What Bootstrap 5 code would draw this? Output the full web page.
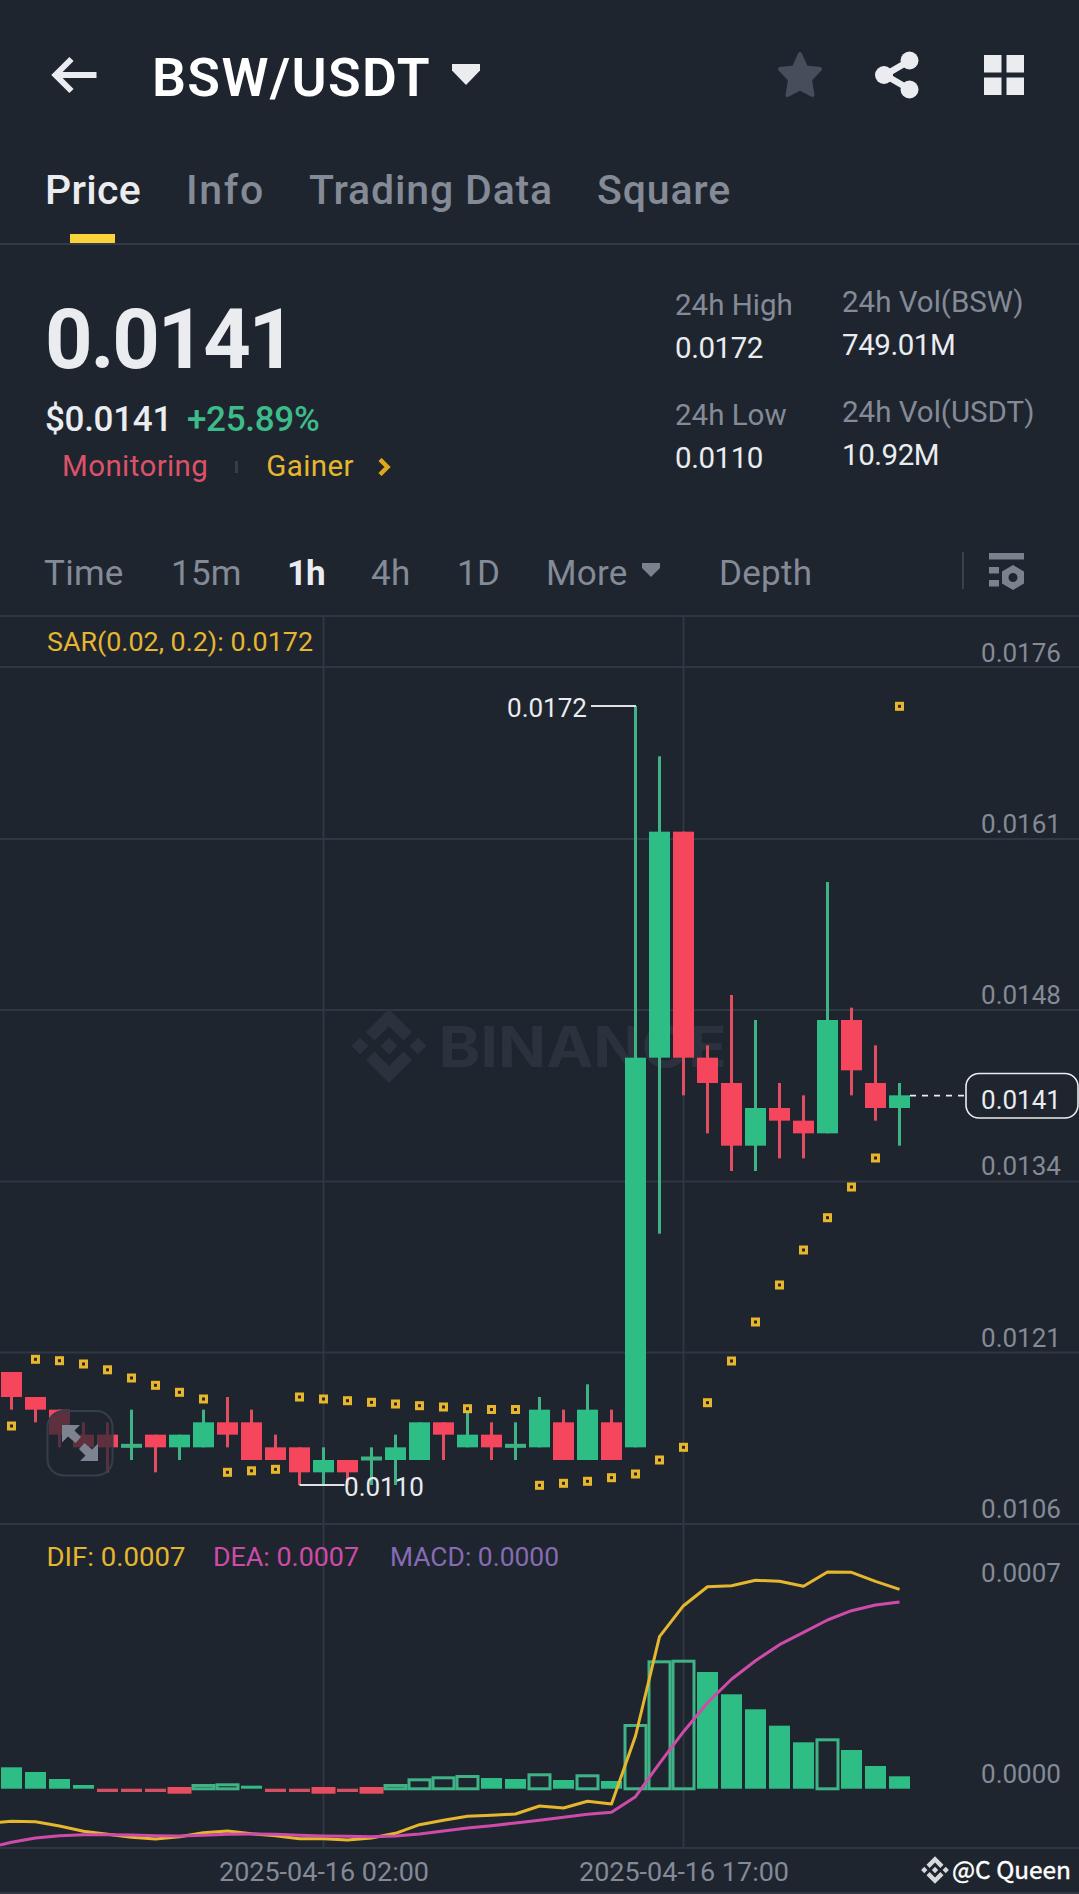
<!DOCTYPE html>
<html lang="en">
<head>
<meta charset="utf-8">
<meta name="viewport" content="width=device-width, initial-scale=1">
<title>BSW/USDT</title>
<link href="https://cdn.jsdelivr.net/npm/bootstrap@5.3.0/dist/css/bootstrap.min.css" rel="stylesheet">
<style>
  :root { --bg:#1e252f; --line:#2f3742; --txt:#eaecef; --dim:#848a96; --up:#2ebd85; --down:#f6465d; --gold:#e6b72e; }
  body { background:var(--bg); color:var(--txt); font-family:Roboto,"Liberation Sans",sans-serif; line-height:1; overflow-x:hidden; }
  svg { display:block; }
  .app { width:1079px; height:1894px; overflow:hidden; }
  .topbar { height:170px; padding:50px 55px 0 51px; }
  .topbar > div { height:54px; }
  .pair { font-size:53.5px; font-weight:600; color:#fff; margin-left:55px; letter-spacing:1.4px; padding-top:2px; }
  .pair-caret { margin:0 0 5px 21px; }
  .tools { gap:57px; padding-bottom:5px; }
  .tabs { height:75px; border-bottom:2px solid #343b47; display:grid; grid-template-columns:141px 123px 288px auto; padding-left:45px; font-size:41px; font-weight:500; color:var(--dim); letter-spacing:.85px; }
  .tabs a { color:inherit; text-decoration:none; }
  .tabs a.on { color:var(--txt); width:94px; letter-spacing:.3px; }
  .tabs a.on::after { content:""; display:block; width:45px; height:9px; margin:23px auto 0; background:#f8d33a; }
  .tabs .info { letter-spacing:1.7px; }
  .ticker { height:300px; padding:53px 0 0 45px; }
  .last { font-size:83px; font-weight:700; letter-spacing:-2.2px; }
  .sub-row { font-size:35px; font-weight:500; margin-top:21px; gap:15px; letter-spacing:-.3px; }
  .tag-row { font-size:29.5px; margin:15px 0 0 17px; letter-spacing:.4px; }
  .tag-sep { width:3px; height:12px; background:#363d49; margin:0 28px 0 27px; }
  .gold { color:var(--gold); } .up { color:#3dbb88; } .down { color:#dc5268; }
  .stats { font-size:29.5px; width:404px; display:grid; grid-template-columns:167px auto; }
  .stats dl { margin:0; } .stats dt { font-weight:400; color:var(--dim); margin-bottom:13px; } .stats dd { margin-bottom:38px; letter-spacing:-.45px; }
  .col-a { margin-top:-7px; } .col-b { margin-top:-10px; }
  .frames { height:70px; padding:11px 0 0 44px; display:grid; grid-template-columns:127px 116px 84px 86px 89px 173px 243px 27px auto; font-size:35px; color:var(--dim); align-items:start; letter-spacing:.25px; }
  .frames .on { color:var(--txt); font-weight:700; letter-spacing:-1px; }
  .frame-sep { width:2px; height:37px; background:#3a414d; margin-top:-4px; }
</style>
</head>
<body>
<main class="app">
  <header class="topbar">
    <div class="d-flex align-items-center">
      <svg width="46" height="38" viewBox="0 0 46 38" class="mb-1" fill="none" stroke="#eaecef" stroke-width="6"><path d="M45.5 19H5M20.5 3L4.500 19L20.500 35"/></svg>
      <span class="pair">BSW/USDT</span>
      <svg class="pair-caret" width="28" height="21" viewBox="0 0 28 21" fill="#eaecef"><path d="M0 0H28V6.500L14 21L0 6.500Z"/></svg>
      <div class="tools d-flex align-items-center ms-auto">
        <svg width="46" height="47" viewBox="0 0 46 47" style="margin-right:-5px" fill="#474d5a" stroke="#474d5a" stroke-width="4" stroke-linejoin="round"><path d="M23 3L29 16.500L43 18L33 28.500L35.500 44L23 37.500L10.500 44L13 28.500L3 18L17 16.500Z"/></svg>
        <svg width="44" height="48" viewBox="0 0 44 48" style="margin-right:8px" fill="#eaecef"><path d="M34 10L10 24L34 38" fill="none" stroke="#eaecef" stroke-width="6.500"/><circle cx="34.500" cy="9.500" r="9"/><circle cx="9" cy="24" r="9"/><circle cx="34.500" cy="38.500" r="9"/></svg>
        <svg width="40" height="40" viewBox="0 0 40 40" fill="#eaecef"><path d="M0 0H17.500V17.500H0ZM22.500 0H40V17.500H22.500ZM0 22.500H17.500V40H0ZM22.500 22.500H40V40H22.500Z"/></svg>
      </div>
    </div>
  </header>

  <nav class="tabs">
    <a class="on" href="#">Price</a><a class="info" href="#">Info</a><a href="#">Trading Data</a><a href="#">Square</a>
  </nav>

  <section class="ticker d-flex justify-content-between">
    <div>
      <div class="last">0.0141</div>
      <div class="sub-row d-flex"><span>$0.0141</span><span class="up">+25.89%</span></div>
      <div class="tag-row d-flex align-items-center">
        <span class="down">Monitoring</span><span class="tag-sep"></span><span class="gold">Gainer</span>
        <svg width="13" height="18" viewBox="0 0 13 18" style="margin-left:24px" fill="none" stroke="#dfa81c" stroke-width="4.500"><path d="M2 1.500L9.500 9L2 16.500"/></svg>
      </div>
    </div>
    <div class="stats">
      <div class="col-a"><dl><dt>24h High</dt><dd>0.0172</dd><dt>24h Low</dt><dd>0.0110</dd></dl></div>
      <div class="col-b"><dl><dt>24h Vol(BSW)</dt><dd>749.01M</dd><dt>24h Vol(USDT)</dt><dd>10.92M</dd></dl></div>
    </div>
  </section>

  <nav class="frames">
    <span>Time</span><span>15m</span><span class="on">1h</span><span>4h</span><span>1D</span>
    <span class="d-flex">More<svg width="18" height="14" viewBox="0 0 18 14" style="margin:7px 0 0 14px" fill="#7b818d"><path d="M0 0H18V5L9 14L0 5Z"/></svg></span>
    <span>Depth</span><span class="frame-sep"></span>
    <svg width="36" height="37" viewBox="0 0 36 37" style="margin-top:-3px" fill="#7b818d"><path d="M0 0H35V6.500H0ZM0 14H10V20.500H0ZM0 27H10V33.500H0Z"/><path fill-rule="evenodd" d="M24 12L35 18.500V30.500L24 37L13 30.500V18.500ZM24 20A4.500 4.500 0 1 0 24 29A4.500 4.500 0 1 0 24 20Z"/></svg>
  </nav>

  <svg id="chart" width="1079" height="1279" viewBox="0 615 1079 1279" font-family="Roboto, 'Liberation Sans', sans-serif" font-size="26"></svg>
</main>

<script src="https://cdn.jsdelivr.net/npm/bootstrap@5.3.0/dist/js/bootstrap.bundle.min.js"></script>
<script>
const BG='#1e252f', UP='#2ebd85', DOWN='#f6465d', UPW='#3fb386', DOWNW='#e34d62', GOLD='#e6b72e', PINK='#cf4ba9', DIM='#848a96', LINE='#2f3742';
let s='';
const cx=i=>11.5+24*i, py=p=>Math.round((1485-(p-110)*12.565)*3)/3;
const rect=(x,y,w,h,f,o='')=>s+=`<rect x="${x}" y="${y}" width="${w}" height="${h}" fill="${f}" ${o}/>`;
const text=(x,y,t,f,len,o='')=>s+=`<text x="${x}" y="${y}" fill="${f}" ${len?`textLength="${len}" lengthAdjust="spacingAndGlyphs"`:''} ${o}>${t}</text>`;
const logo=(x,y,k,f)=>s+=`<g transform="translate(${x} ${y}) scale(${k})" fill="${f}"><path d="M0 -37L23 -14L14.500 -5.500L0 -20L-14.500 -5.500L-23 -14ZM0 37L23 14L14.500 5.500L0 20L-14.500 5.500L-23 14ZM0 -8.500L8.500 0L0 8.500L-8.500 0ZM-29 -8.500L-20.500 0L-29 8.500L-37.500 0ZM29 -8.500L37.500 0L29 8.500L20.500 0Z"/></g>`;

// grid
[616,667,839,1010,1181.5,1352.5,1524,1848,1893].forEach(y=>rect(0,y-1,1079,2,LINE));
[323.5,683.5].forEach(x=>rect(x-1,616,2,1232,LINE));
// watermark
logo(389,1046,1,'#2b323d');
text(438.5,1067,'BINANCE','#2b323d',288,'font-family="Inter, sans-serif" font-weight="700" font-size="56.5"');

// candles: [up, top, bottom, high, low]
const C=[[0,119,117,119,116],[0,117,116,117,115],[0,116,114,116,113],[0,114,113,115,113],[0,114,113,115,111],[1,113,113,116,112],[0,114,113,114,111],[1,114,113,114,112],[1,115,113,116,113],[0,115,114,117,113],[0,115,112,116,112],[0,113,112,114,112],[0,113,111,113,110],[1,112,111,113,110],[0,112,111,112,110],[1,112,112,113,110],[1,113,112,114,110],[1,115,112,115,112],[0,115,114,115,112],[1,114,113,116,113],[0,114,113,115,112],[1,113,113,115,112],[1,116,113,117,113],[0,115,112,116,112],[1,116,112,118,112],[0,115,112,116,112],[1,144,113,172,113],[1,162,144,168,130],[0,162,144,162,141],[0,144,142,145,138],[0,142,137,149,135],[1,140,137,147,135],[0,140,139,142,136],[0,139,138,141,136],[1,147,138,158,138],[0,147,143,148,141],[0,142,140,145,139],[1,141,140,142,137]];
C.forEach(([u,t,b,h,l],i)=>{
  rect(cx(i)-1.5,py(h),3,py(l)-py(h),u?UPW:DOWNW);
  const d=t===b; rect(cx(i)-10.5,d?py(t)-3.5:py(t),21,d?4:py(b)-py(t),d?UPW:(u?UP:DOWN));
});

// parabolic SAR markers
const S=[1426,1359.3,1360.7,1364,1369.8,1378,1385.3,1392.3,1399,1472.3,1470.8,1469.3,1397,1399,1400.7,1402.3,1404,1405.7,1407,1408.7,1409.5,1409.5,1485.3,1483.3,1481.3,1477.7,1474,1460,1447.3,1402.7,1361,1322,1285,1250,1217.7,1187,1158,706.3];
S.forEach((y,i)=>{ rect(cx(i)-4.5,y-4.5,9,9,GOLD); rect(cx(i)-1.5,y-1.5,3,3,'#2b2414'); });

// price extremes, last price
rect(591,705,45,2,'#dfe1e5'); text(507,716.7,'0.0172','#eaecef',80);
rect(299.5,1484,45,2,'#dfe1e5'); text(344,1495.7,'0.0110','#eaecef',80);
s+=`<path d="M910 1095.700H966" stroke="#eaecef" stroke-width="1.700" stroke-dasharray="6 6"/>`;
rect(966,1073.5,112,44.5,BG,'rx="13" stroke="#eaecef" stroke-width="1.6"');
text(981,1108.7,'0.0141','#eaecef',80);

// axis
[['0.0176',662],['0.0161',833],['0.0148',1004],['0.0134',1174.7],['0.0121',1346.7],['0.0106',1517.7],['0.0007',1581.7],['0.0000',1783]].forEach(a=>text(981,a[1],a[0],DIM,80));
text(219,1881,'2025-04-16 02:00',DIM,210); text(579,1881,'2025-04-16 17:00',DIM,210);
text(47,650.7,'SAR(0.02, 0.2): 0.0172',GOLD,266);
text(46.5,1566,'DIF: 0.0007',GOLD,139); text(213,1566,'DEA: 0.0007',PINK,146); text(390,1566,'MACD: 0.0000','#866bb5',169);

// MACD histogram: 1st = style (f filled up, h hollow up, r filled down, q outlined down), 2nd = top
const M=[['f',1767.3],['f',1772],['f',1779],['f',1785],['r'],['r'],['r'],['q'],['h',1784],['h',1783.3],['f',1785.7],['r'],['r'],['q'],['r'],['q'],['h',1784],['h',1778.3],['h',1776.3],['h',1775],['f',1778],['f',1779],['h',1773.3],['f',1780],['h',1774.3],['f',1781],['h',1724],['h',1660.3],['h',1659.7],['f',1672],['f',1694.3],['f',1709.3],['f',1725.7],['f',1742.3],['h',1738.3],['f',1750],['f',1766],['f',1776.3]];
M.forEach(([k,y],i)=>{ const x=cx(i);
  if(k==='f') rect(x-10.5,y,21,1788.7-y,UP);
  if(k==='r') rect(x-10.5,1788.7,21,3.3,'#d64e62');
  if(k==='q') rect(x-12,1787,24,6.7,'#e84c61');
  if(k==='h') rect(x-10.5,y+1.5,21,1790.3-y-3,'none',`stroke="${UPW}" stroke-width="3"`);
});
const line=(a,c,x0)=>s+=`<polyline fill="none" stroke="${c}" stroke-width="3" stroke-linejoin="round" points="${[[0,x0],...a.map((v,i)=>[cx(i),v])].map(p=>p[0]+','+(1520+p[1]/3).toFixed(1)).join(' ')}"/>`;
line([904,905,918,934,943,952,957,950,938,933,941,947,956,956,960,954,940,914,901,889,886,882,858,864,844,852,648,350,257,200,197,181,184,199,156,157,184,208],GOLD,907);
line([967,954,947,944,944,945,947,948,946,943,942,943,946,948,949,950,948,942,933,924,917,909,901,892,883,877,830,730,635,548,478,422,374,337,300,272,255,246],PINK,975);

// expand button
rect(47.5,1411,65,64.5,BG,'rx="16" fill-opacity=".7" stroke="#363e4a" stroke-width="2"');
s+='<g fill="#7d8390"><path d="M62 1425H80L74.500 1430.500L81 1437L75.500 1443L68 1436.500L62 1442.500Z"/><path d="M98 1461H80L85.500 1455.500L79 1449L84.500 1443L92 1449.500L98 1443.500Z"/></g>';

// signature
logo(935,1870,.37,'#d6d8da');
text(952,1879,'@C Queen','#fff',119,'font-family="Noto Sans CJK SC, Noto Sans, sans-serif" font-weight="400" font-size="24" stroke="#fff" stroke-width=".4"');
document.getElementById('chart').innerHTML=s;
</script>
</body>
</html>
